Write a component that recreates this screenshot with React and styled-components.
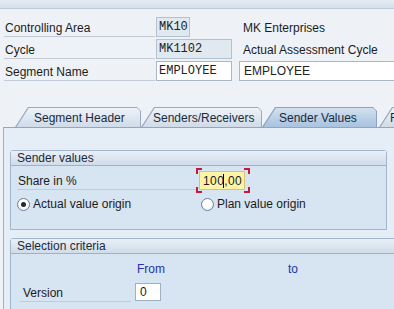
import React from 'react';
import styled, { createGlobalStyle } from 'styled-components';

const GlobalStyle = createGlobalStyle`
  html, body {
    margin: 0;
    padding: 0;
  }
  body {
    background: #eef2f7;
    font-family: "Liberation Sans", Arial, sans-serif;
    font-size: 12px;
    color: #1b1b1b;
  }
`;

const Page = styled.div`
  width: 394px;
  height: 309px;
  overflow: hidden;
  background: #eef2f7;
`;

const TopBar = styled.div`
  height: 8px;
  background: linear-gradient(#e4ebf3, #d6e0eb);
  border-bottom: 1px solid #bfcbd8;
`;

const HeaderForm = styled.div`
  display: grid;
  grid-template-columns: 152px 83px 170px;
  grid-auto-rows: 20px;
  row-gap: 2px;
  padding: 8px 0 0 4px;
`;

const Label = styled.div`
  display: flex;
  align-items: center;
  padding-left: ${(p) => p.$pad || 1}px;
  padding-top: 2px;
  border-bottom: 1px solid #c3ccd6;
  margin-right: ${(p) => p.$gap || 0}px;
  white-space: nowrap;
`;

const Field = styled.div`
  box-sizing: border-box;
  height: 20px;
  width: ${(p) => p.$w}px;
  border: 1px solid ${(p) => (p.$readOnly ? '#b3c2d1' : '#a9b7c6')};
  background: ${(p) => (p.$readOnly ? '#e0e8f0' : '#ffffff')};
  font-family: ${(p) => (p.$mono ? '"Liberation Mono", "Courier New", monospace' : 'inherit')};
  font-size: 12px;
  line-height: 19px;
  padding-left: ${(p) => (p.$mono ? 2 : 4)}px;
  white-space: nowrap;
  overflow: hidden;
  color: #222;
`;

const Desc = styled.div`
  display: flex;
  align-items: center;
  padding: 2px 0 0 4px;
  white-space: nowrap;
`;

const TabStrip = styled.div`
  display: flex;
  height: 20px;
  margin-top: 26px;
  padding-left: 15px;
`;

const Tab = styled.div`
  position: relative;
  isolation: isolate;
  flex: none;
  box-sizing: border-box;
  width: ${(p) => p.$w}px;
  height: 20px;
  margin-left: ${(p) => p.$ml || 0}px;
  padding-left: ${(p) => p.$pl}px;
  line-height: 22px;
  color: #1c2a3a;
  white-space: nowrap;
  overflow: hidden;

  &::before {
    content: '';
    position: absolute;
    inset: 0;
    z-index: -2;
    background: ${(p) => (p.$active ? '#89a3c3' : '#98abc2')};
    clip-path: polygon(0 100%, 13px 0, calc(100% - 4px) 0, 100% 4px, 100% 100%);
  }
  &::after {
    content: '';
    position: absolute;
    inset: 1px 1px 0 1px;
    z-index: -1;
    background: ${(p) =>
      p.$active
        ? 'linear-gradient(#d3e1f0, #b9cfe6 55%, #a9c3df)'
        : 'linear-gradient(#eef3f9, #dde6f0 55%, #cfdbe8)'};
    clip-path: polygon(0.5px 100%, 12.8px 0, calc(100% - 3px) 0, 100% 3px, 100% 100%);
  }
`;

const Panel = styled.div`
  margin-left: 3px;
  height: 200px;
  border-left: 1px solid #9fb2c8;
  border-top: 1px solid #8fa7c2;
  background: #e5edf6;
  padding: 22px 0 0 6px;
`;

const Group = styled.div`
  box-sizing: border-box;
  width: ${(p) => p.$w}px;
  height: ${(p) => p.$h}px;
  margin-bottom: 8px;
  border: 1px solid #a3b5ca;
  border-radius: 3px 3px 0 0;
  background: #d7e4f2;
`;

const GroupHeader = styled.div`
  height: 14px;
  line-height: 15px;
  padding-left: 6px;
  background: linear-gradient(#e9eff6, #d0dcea);
  border-bottom: 1px solid #9db1c8;
  color: #1c2a3a;
`;

const SenderBody = styled.div`
  display: grid;
  grid-template-columns: 179px 1fr;
  grid-template-rows: 20px 22px;
  padding: 4px 0 0 6px;
`;

const FocusFrame = styled.div`
  position: relative;
  margin-left: 3px;
  width: 46px;
  height: 19px;
  margin-top: 1px;

  &::before,
  &::after {
    content: '';
    position: absolute;
    width: 46px;
    left: -3px;
    padding: 0 2px;
    height: 4px;
    border: 2px solid #c21a3a;
    clip-path: polygon(0 0, 6px 0, 6px 100%, 0 100%, 0 0, 100% 0, 100% 100%, calc(100% - 6px) 100%, calc(100% - 6px) 0);
  }
  &::before {
    top: -3px;
    border-bottom: none;
  }
  &::after {
    bottom: -3px;
    border-top: none;
  }
`;

const ShareInput = styled.div`
  box-sizing: border-box;
  width: 46px;
  height: 19px;
  background: #fff3a6;
  border: 1px solid #d9c472;
  line-height: 18px;
  padding-left: 3px;
  letter-spacing: 0.4px;
  white-space: nowrap;
  color: #1b1b1b;
`;

const Caret = styled.span`
  display: inline-block;
  width: 1px;
  height: 14px;
  margin: 0 0 0 -1px;
  vertical-align: -3px;
  background: #000;
`;

const RadioRow = styled.label`
  display: flex;
  align-items: center;
  gap: 3px;
  margin-top: 6px;
  height: 16px;
  white-space: nowrap;
  margin-left: ${(p) => p.$ml || 0}px;
`;

const RadioDot = styled.span`
  box-sizing: border-box;
  width: 13px;
  height: 13px;
  border-radius: 50%;
  border: 1px solid #6f7f92;
  background: radial-gradient(circle at 50% 40%, #ffffff 40%, #e3e9f0);
  display: flex;
  align-items: center;
  justify-content: center;

  &::after {
    content: '';
    width: 5px;
    height: 5px;
    border-radius: 50%;
    background: ${(p) => (p.$checked ? '#1e2a38' : 'transparent')};
  }
`;

const SelectionBody = styled.div`
  display: grid;
  grid-template-columns: 111px 149px 1fr;
  grid-template-rows: 14px 20px;
  row-gap: 6px;
  column-gap: 4px;
  padding: 8px 0 0 9px;
`;

const ColHead = styled.div`
  color: #2235a6;
  padding-left: ${(p) => p.$pl || 0}px;
  line-height: 15px;
`;

const SmallField = styled.div`
  box-sizing: border-box;
  width: 26px;
  height: 18px;
  margin-top: 1px;
  background: #fff;
  border: 1px solid #9fb0c2;
  padding-left: 4px;
  line-height: 17px;
`;

export default function App() {
  return (
    <Page>
      <GlobalStyle />
      <TopBar />
      <HeaderForm>
        <Label $gap={1}>Controlling Area</Label>
        <div>
          <Field $w={34} $readOnly $mono>MK10</Field>
        </div>
        <Desc>MK Enterprises</Desc>

        <Label $gap={1}>Cycle</Label>
        <div>
          <Field $w={76} $readOnly $mono>MK1102</Field>
        </div>
        <Desc>Actual Assessment Cycle</Desc>

        <Label $gap={1}>Segment Name</Label>
        <div>
          <Field $w={76} $mono>EMPLOYEE</Field>
        </div>
        <div>
          <Field $w={170}>EMPLOYEE</Field>
        </div>
      </HeaderForm>

      <TabStrip>
        <Tab $w={126} $pl={19}>Segment Header</Tab>
        <Tab $w={121} $pl={12}>Senders/Receivers</Tab>
        <Tab $w={115} $pl={17} $active>Sender Values</Tab>
        <Tab $w={40} $pl={11} $ml={2}>R</Tab>
      </TabStrip>

      <Panel>
        <Group $w={377} $h={80}>
          <GroupHeader>Sender values</GroupHeader>
          <SenderBody>
            <Label $pad={1}>Share in %</Label>
            <div>
              <FocusFrame>
                <ShareInput>
                  100<Caret />,00
                </ShareInput>
              </FocusFrame>
            </div>
            <RadioRow>
              <RadioDot $checked />
              Actual value origin
            </RadioRow>
            <RadioRow $ml={5}>
              <RadioDot />
              Plan value origin
            </RadioRow>
          </SenderBody>
        </Group>

        <Group $w={400} $h={90}>
          <GroupHeader>Selection criteria</GroupHeader>
          <SelectionBody>
            <div />
            <ColHead $pl={2}>From</ColHead>
            <ColHead $pl={0}>to</ColHead>
            <Label $pad={3}>Version</Label>
            <div>
              <SmallField>0</SmallField>
            </div>
            <div />
          </SelectionBody>
        </Group>
      </Panel>
    </Page>
  );
}
